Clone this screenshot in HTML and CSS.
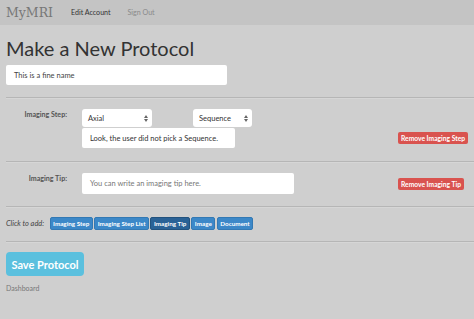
FILE: index.html
```html
<!DOCTYPE html>
<html lang="en">
<head>
    <meta charset="UTF-8">
    <title>MyMRI - Make a New Protocol</title>
    <link rel="stylesheet" href="styles.css">
</head>
<body>

    <nav class="navbar">
        <a class="brand" href="#">MyMRI</a>
        <a class="nav-link active" href="#">Edit Account</a>
        <a class="nav-link" href="#">Sign Out</a>
    </nav>

    <main class="container">
        <h1>Make a New Protocol</h1>
        <div class="field name-field">This is a fine name</div>

        <hr>

        <section class="step">
            <label class="step-label">Imaging Step:</label>
            <div class="step-body">
                <div class="select-row">
                    <div class="fake-select axial">Axial
                        <svg class="arrows" width="4" height="7" viewBox="0 0 4 7"><path d="M0 3 L2 0 L4 3 Z M0 4 L4 4 L2 7 Z" fill="#666"/></svg>
                    </div>
                    <div class="fake-select sequence">Sequence
                        <svg class="arrows" width="4" height="7" viewBox="0 0 4 7"><path d="M0 3 L2 0 L4 3 Z M0 4 L4 4 L2 7 Z" fill="#666"/></svg>
                    </div>
                </div>
                <div class="field note">Look, the user did not pick a Sequence.</div>
            </div>
            <div class="step-action">
                <button class="btn-remove">Remove Imaging Step</button>
            </div>
        </section>

        <hr>

        <section class="step tip">
            <label class="step-label">Imaging Tip:</label>
            <div class="step-body">
                <div class="field tip-field">You can write an imaging tip here.</div>
            </div>
            <div class="step-action">
                <button class="btn-remove">Remove Imaging Tip</button>
            </div>
        </section>

        <hr>

        <div class="add-row">
            <em>Click to add:</em>
            <button class="btn-add">Imaging Step</button>
            <button class="btn-add">Imaging Step List</button>
            <button class="btn-add pressed">Imaging Tip</button>
            <button class="btn-add">Image</button>
            <button class="btn-add">Document</button>
        </div>

        <hr>

        <button class="btn-save">Save Protocol</button>
        <a class="dash-link" href="#">Dashboard</a>
    </main>

</body>
</html>
```

FILE: styles.css
```css
/* --- BASE --- */
body {
    margin: 0;
    background-color: #cfcfcf;
    color: #333;
    font-family: Lato, "Open Sans", sans-serif;
}

/* --- NAVBAR --- */
.navbar {
    height: 25px;
    display: flex;
    align-items: center;
    padding-left: 6px;
    background-color: #c4c4c4;
}

.navbar a {
    text-decoration: none;
}

.brand {
    font-family: "DejaVu Serif", "Liberation Serif", serif;
    font-size: 12.5px;
    color: #777;
    margin-right: 18px;
}

.nav-link {
    font-size: 7.1px;
    color: #8a8a8a;
    margin-right: 17px;
}

.nav-link.active {
    color: #333;
}

/* --- PAGE --- */
.container {
    padding-left: 6px;
}

h1 {
    font-size: 20px;
    font-weight: 400;
    line-height: 24px;
    margin: 11px 0 5px;
}

.field {
    box-sizing: border-box;
    background: #fff;
    border-radius: 2px;
    font-size: 7.5px;
    color: #444;
    padding: 0 8px;
    display: flex;
    align-items: center;
}

.name-field {
    width: 221px;
    height: 20px;
}

hr {
    border: none;
    border-top: 1px solid #b6b6b6;
    border-bottom: 1px solid #d6d6d6;
    margin: 0;
}

.name-field + hr {
    margin-top: 12px;
}

/* --- STEPS --- */
.step {
    display: grid;
    grid-template-columns: 76px 1fr 76px;
    padding: 10px 0 13px;
}

.step-label {
    box-sizing: border-box;
    padding: 1px 15px 0 0;
    text-align: right;
    font-size: 7.1px;
    font-weight: 700;
    line-height: 9px;
    color: #555;
}

.select-row {
    display: flex;
    gap: 41px;
}

.fake-select {
    box-sizing: border-box;
    height: 18px;
    background: #fff;
    border-radius: 3px;
    font-size: 7.5px;
    color: #333;
    padding: 0 4px 0 6px;
    display: flex;
    align-items: center;
    justify-content: space-between;
}

.axial {
    width: 70px;
}

.sequence {
    width: 59px;
}

.note {
    width: 153px;
    height: 20px;
    margin-top: 1px;
    color: #333;
}

.step-action {
    display: flex;
    align-items: flex-end;
    padding-bottom: 4px;
}

.btn-remove {
    background: #d9534f;
    color: #fff;
    border: none;
    border-radius: 2px;
    font-family: inherit;
    font-size: 6.7px;
    font-weight: 700;
    padding: 0 3px;
    height: 12px;
    line-height: 12px;
    white-space: nowrap;
}

.tip {
    padding: 10px 0 12px;
}

.tip .step-action {
    align-items: center;
    padding: 1px 0 0;
}

.tip-field {
    width: 212px;
    height: 21px;
    color: #777;
}

/* --- ADD BUTTONS --- */
.add-row {
    display: flex;
    align-items: center;
    gap: 1.5px;
    padding: 9px 0 11px;
}

.add-row em {
    font-size: 7.4px;
    color: #444;
    margin-right: 4px;
}

.btn-add {
    box-sizing: border-box;
    background: #3c88c8;
    color: #fff;
    border: 1px solid #3379b4;
    border-radius: 2px;
    font-family: inherit;
    font-size: 6.3px;
    font-weight: 700;
    height: 13px;
    padding: 0 2.5px;
    white-space: nowrap;
}

.btn-add.pressed {
    background: #2a6296;
    border-color: #22527e;
}

/* --- FOOTER --- */
.btn-save {
    display: block;
    margin-top: 9px;
    width: 78px;
    height: 24px;
    padding: 0;
    background: #5bc0de;
    color: #fff;
    border: none;
    border-radius: 4px;
    font-family: inherit;
    font-size: 11px;
    font-weight: 700;
    white-space: nowrap;
}

.dash-link {
    display: block;
    margin-top: 8px;
    font-size: 7px;
    line-height: 9px;
    color: #777;
    text-decoration: none;
}
```
